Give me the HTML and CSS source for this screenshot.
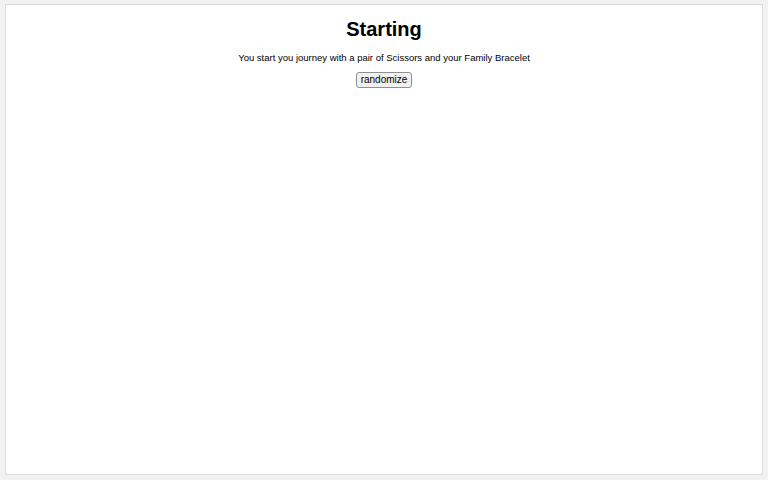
FILE: index.html
```html
<!DOCTYPE html>
<html>
<head>
<meta charset="utf-8">
<link rel="stylesheet" href="styles.css">
</head>
<body>
<div class="panel">
  <h1 class="title">Starting</h1>
  <p class="desc">You start you journey with a pair of Scissors and your Family Bracelet</p>
  <button class="btn">randomize</button>
</div>
</body>
</html>
```
FILE: styles.css
```css
html, body { margin: 0; padding: 0; }
body {
  background: #f2f2f2;
  font-family: "Liberation Sans", Arial, sans-serif;
  padding: 4px 5px 5px 5px;
  height: 480px;
  box-sizing: border-box;
}
.panel {
  background: #fff;
  border: 1px solid #dcdcdc;
  height: 471px;
  box-sizing: border-box;
  display: flex;
  flex-direction: column;
  align-items: center;
  padding-top: 13px;
}
.title {
  font-size: 20px;
  font-weight: bold;
  margin: 0;
  line-height: 23px;
  color: #000;
}
.desc {
  font-size: 9.5px;
  margin: 11px 0 0 0;
  line-height: 12px;
  color: #000;
}
.btn {
  margin-top: 8px;
  font-family: "Liberation Sans", Arial, sans-serif;
  font-size: 10px;
  padding: 1px 4px;
  height: 16px;
  line-height: 12px;
  background: #f0f0f0;
  border: 1px solid #8f8f8f;
  border-radius: 3px;
  color: #000;
}
```
